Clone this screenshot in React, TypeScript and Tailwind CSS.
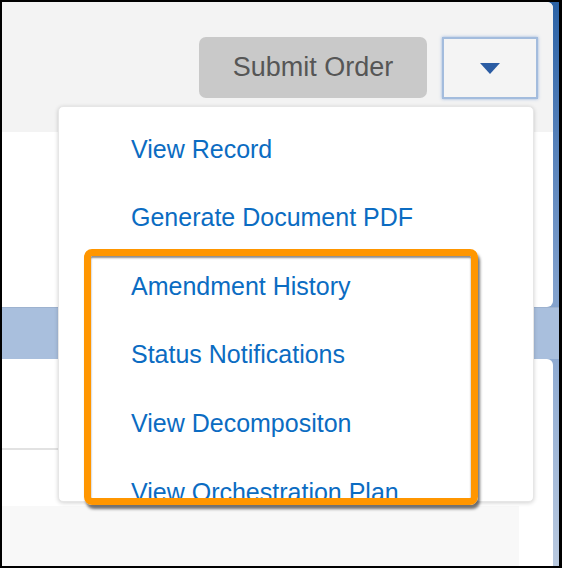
const items = [
  "View Record",
  "Generate Document PDF",
  "Amendment History",
  "Status Notifications",
  "View Decompositon",
  "View Orchestration Plan",
]

export default function App() {
  return (
    <div
      className="w-[562px] h-[568px] bg-black pt-[2px] pl-[2px] pr-[3px] pb-[2px]"
      style={{ fontFamily: '"Liberation Sans", Arial, sans-serif' }}
    >
      <div className="relative h-full flex flex-col bg-gradient-to-b from-[#2a62a6] via-[#7f9fcc] to-[#b9c9df] overflow-hidden">
        {/* top card */}
        <div className="mr-[6px] h-[305px] bg-white rounded-tr-[6px] rounded-br-[6px] flex flex-col overflow-hidden">
          <div className="h-[130px] bg-[#f3f3f3] flex justify-end items-start pt-[35px] pr-[15px] gap-[15px]">
            <div className="w-[228px] h-[61px] rounded-[7px] bg-[#c9c9c9] flex items-center justify-center text-[27px] text-[#565656]">
              Submit Order
            </div>
            <div className="w-[96px] h-[62px] bg-[#f4f4f4] border-2 border-[#a3bcdd] shadow-[0_0_3px_rgba(110,150,210,0.7)] flex items-center justify-center">
              <svg width="20" height="11" viewBox="0 0 20 11">
                <polygon points="0,0 20,0 10,11" fill="#2b5ca3" />
              </svg>
            </div>
          </div>
        </div>

        {/* blue band */}
        <div className="h-[52px] bg-[#a9bfdd] border-t border-[#9db2cf]" />

        {/* bottom card */}
        <div className="flex-1 mr-[6px] bg-white rounded-tr-[6px] flex flex-col">
          <div className="h-[91px] w-[517px] border-b-2 border-[#e2e2e2]" />
          <div className="h-[56px]" />
          <div className="flex-1 flex">
            <div className="w-[517px] bg-[#f8f8f8]" />
            <div className="flex-1 bg-white" />
          </div>
        </div>

        {/* dropdown menu */}
        <div className="absolute left-[56px] top-[104px] w-[476px] h-[396px] bg-white rounded-[5px] shadow-[0_1px_4px_rgba(0,0,0,0.18)] border border-[#e6e6e6] overflow-hidden pt-[8px]">
          {items.map((t) => (
            <div
              key={t}
              className="h-[68.6px] flex items-center pl-[72px] text-[25px] text-[#0b6cc2] whitespace-nowrap"
            >
              {t}
            </div>
          ))}
        </div>

        {/* highlight annotation */}
        <div className="absolute left-[82px] top-[247px] w-[394px] h-[256px] border-[7px] border-[#ff9600] rounded-[8px] shadow-[2px_4px_3px_rgba(0,0,0,0.55),inset_0_2px_2px_rgba(0,0,0,0.45)]" />
      </div>
    </div>
  )
}
